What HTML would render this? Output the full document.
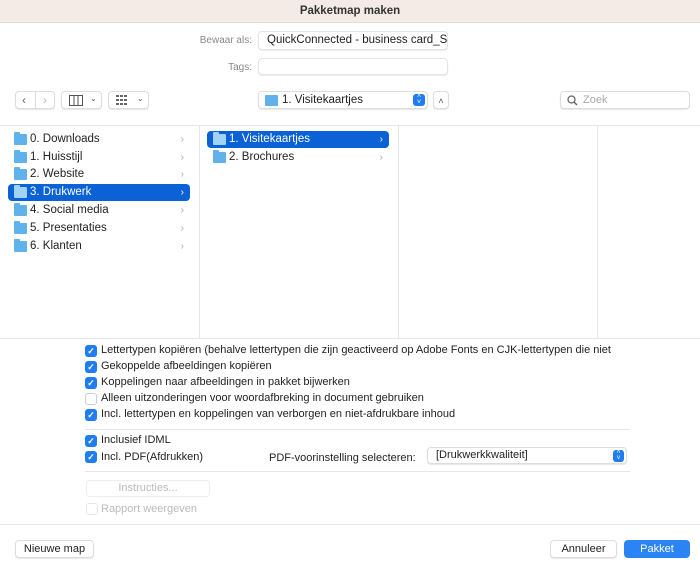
<!DOCTYPE html>
<html><head><style>
*{box-sizing:border-box;margin:0;padding:0}
body{width:700px;height:573px;background:#fff;font-family:"Liberation Sans",sans-serif;font-size:11px;color:#222;position:relative;overflow:hidden}
.a{position:absolute}
.title{left:0;top:0;width:700px;height:23px;background:#f4ebe6;border-bottom:1px solid #e2dad6;text-align:center;font-weight:bold;font-size:11.5px;line-height:23px;color:#333}
.fld{background:#fff;border:1px solid #e4e4e4;border-radius:4px;box-shadow:0 1px 1px rgba(0,0,0,.08)}
.btn{background:#fff;border:1px solid #ddd;border-radius:4px;box-shadow:0 1px 1px rgba(0,0,0,.1)}
.lbl{color:#888;font-size:10px;text-align:right}
.row{position:absolute;height:17px;line-height:17px;font-size:11.5px;color:#222}
.row .fo{position:absolute;left:6px;top:3px;width:13px;height:11px;background:#5fb2ea;border-radius:1px}
.row .fo:before{content:"";position:absolute;left:0;top:-2px;width:6px;height:3px;background:#5fb2ea;border-radius:1px 1px 0 0}
.row .t{position:absolute;left:22px}
.row .c{position:absolute;right:6px;color:#aaa;font-size:10px}
.sel{background:#0a62d6;color:#fff;border-radius:4px}
.sel .c{color:#fff}
.sel .fo,.sel .fo:before{background:#9fd3f7}
.cb{position:absolute;width:12px;height:12px;border-radius:3px;background:#1f7cf2;color:#fff;font-size:9px;line-height:12px;text-align:center;font-weight:bold}
.cb.off{background:#fff;border:1px solid #ccc}
.ot{position:absolute;font-size:11px;color:#222;white-space:nowrap}
.hr{position:absolute;height:1px;background:#e6e6e6}
</style></head><body>
<div class="a title">Pakketmap maken</div>
<div class="a lbl" style="left:190px;top:35px;width:62px">Bewaar als:</div>
<div class="a fld" style="left:258px;top:31px;width:190px;height:19px;line-height:17px;padding-left:8px;font-size:11.5px;white-space:nowrap;overflow:hidden">QuickConnected - business card_S</div>
<div class="a lbl" style="left:190px;top:62px;width:62px">Tags:</div>
<div class="a fld" style="left:258px;top:58px;width:190px;height:17px"></div>

<div class="a btn" style="left:15px;top:91px;width:40px;height:18px"><span class="a" style="left:6px;top:1px;color:#666;font-size:12px">&#x2039;</span><span class="a" style="left:19px;top:0;width:1px;height:16px;background:#ddd"></span><span class="a" style="left:27px;top:1px;color:#bbb;font-size:12px">&#x203A;</span></div>
<div class="a btn" style="left:61px;top:91px;width:41px;height:18px"><svg class="a" style="left:7px;top:3px" width="14" height="11"><rect x="0.5" y="0.5" width="13" height="10" fill="none" stroke="#555"/><line x1="5" y1="1" x2="5" y2="10" stroke="#555"/><line x1="9" y1="1" x2="9" y2="10" stroke="#555"/></svg><span class="a" style="left:28px;top:2px;font-size:8px;color:#555">&#x2304;</span></div>
<div class="a btn" style="left:108px;top:91px;width:41px;height:18px"><svg class="a" style="left:7px;top:3px" width="12" height="11" fill="#666"><rect x="0" y="0" width="3" height="2"/><rect x="4" y="0" width="3" height="2"/><rect x="8" y="0" width="3" height="2"/><rect x="0" y="4" width="3" height="2"/><rect x="4" y="4" width="3" height="2"/><rect x="8" y="4" width="3" height="2"/><rect x="0" y="8" width="3" height="2"/><rect x="4" y="8" width="3" height="2"/><rect x="8" y="8" width="3" height="2"/></svg><span class="a" style="left:28px;top:2px;font-size:8px;color:#555">&#x2304;</span></div>

<div class="a btn" style="left:258px;top:91px;width:170px;height:18px"><span class="a" style="left:6px;top:3px;width:13px;height:11px;background:#5fb2ea;border-radius:1px"></span><span class="a" style="left:23px;top:2px;font-size:11.5px">1. Visitekaartjes</span><span class="a" style="left:154px;top:2px;width:12px;height:12px;background:#1f7cf2;border-radius:3px;color:#fff;font-size:7px;line-height:6px;text-align:center">&#x2c4;<br>&#x2c5;</span></div>
<div class="a btn" style="left:433px;top:91px;width:16px;height:18px;text-align:center;font-size:9px;line-height:18px;color:#555">&#x2c4;</div>
<div class="a btn" style="left:560px;top:91px;width:130px;height:18px"><svg class="a" style="left:6px;top:3px" width="11" height="11"><circle cx="4.5" cy="4.5" r="3.5" fill="none" stroke="#666" stroke-width="1.3"/><line x1="7" y1="7" x2="10" y2="10" stroke="#666" stroke-width="1.5"/></svg><span class="a" style="left:22px;top:2px;color:#aaa">Zoek</span></div>

<div class="hr" style="left:0;top:125px;width:700px"></div>
<div class="a" style="left:199px;top:126px;width:1px;height:212px;background:#e6e6e6"></div>
<div class="a" style="left:398px;top:126px;width:1px;height:212px;background:#e6e6e6"></div>
<div class="a" style="left:597px;top:126px;width:1px;height:212px;background:#e6e6e6"></div>
<div class="hr" style="left:0;top:338px;width:700px"></div>

<div class="row" style="left:8px;top:131px;width:182px"><span class="fo"></span><span class="t">0. Downloads</span><span class="c">&#x203A;</span></div>
<div class="row" style="left:8px;top:149px;width:182px"><span class="fo"></span><span class="t">1. Huisstijl</span><span class="c">&#x203A;</span></div>
<div class="row" style="left:8px;top:166px;width:182px"><span class="fo"></span><span class="t">2. Website</span><span class="c">&#x203A;</span></div>
<div class="row sel" style="left:8px;top:184px;width:182px"><span class="fo"></span><span class="t">3. Drukwerk</span><span class="c">&#x203A;</span></div>
<div class="row" style="left:8px;top:202px;width:182px"><span class="fo"></span><span class="t">4. Social media</span><span class="c">&#x203A;</span></div>
<div class="row" style="left:8px;top:220px;width:182px"><span class="fo"></span><span class="t">5. Presentaties</span><span class="c">&#x203A;</span></div>
<div class="row" style="left:8px;top:238px;width:182px"><span class="fo"></span><span class="t">6. Klanten</span><span class="c">&#x203A;</span></div>
<div class="row sel" style="left:207px;top:131px;width:182px"><span class="fo"></span><span class="t">1. Visitekaartjes</span><span class="c">&#x203A;</span></div>
<div class="row" style="left:207px;top:149px;width:182px"><span class="fo"></span><span class="t">2. Brochures</span><span class="c">&#x203A;</span></div>

<span class="cb" style="left:85px;top:345px">&#x2713;</span><div class="ot" style="left:101px;top:344px;width:512px;overflow:hidden">Lettertypen kopiëren (behalve lettertypen die zijn geactiveerd op Adobe Fonts en CJK-lettertypen die niet</div>
<span class="cb" style="left:85px;top:361px">&#x2713;</span><div class="ot" style="left:101px;top:360px">Gekoppelde afbeeldingen kopiëren</div>
<span class="cb" style="left:85px;top:377px">&#x2713;</span><div class="ot" style="left:101px;top:376px">Koppelingen naar afbeeldingen in pakket bijwerken</div>
<span class="cb off" style="left:85px;top:393px"></span><div class="ot" style="left:101px;top:392px">Alleen uitzonderingen voor woordafbreking in document gebruiken</div>
<span class="cb" style="left:85px;top:409px">&#x2713;</span><div class="ot" style="left:101px;top:408px">Incl. lettertypen en koppelingen van verborgen en niet-afdrukbare inhoud</div>
<div class="hr" style="left:85px;top:429px;width:545px"></div>
<span class="cb" style="left:85px;top:435px">&#x2713;</span><div class="ot" style="left:101px;top:434px">Inclusief IDML</div>
<span class="cb" style="left:85px;top:451px">&#x2713;</span><div class="ot" style="left:101px;top:451px">Incl. PDF(Afdrukken)</div>
<div class="ot" style="left:269px;top:452px">PDF-voorinstelling selecteren:</div>
<div class="a btn" style="left:427px;top:447px;width:200px;height:17px"><span class="a" style="left:8px;top:1px">[Drukwerkkwaliteit]</span><span class="a" style="left:185px;top:2px;width:11px;height:12px;background:#1f7cf2;border-radius:3px;color:#fff;font-size:7px;line-height:6px;text-align:center">&#x2c4;<br>&#x2c5;</span></div>
<div class="hr" style="left:85px;top:471px;width:545px"></div>
<div class="a" style="left:86px;top:480px;width:124px;height:17px;border:1px solid #eee;border-radius:4px;color:#bbb;text-align:center;line-height:15px">Instructies...</div>
<span class="cb off" style="left:86px;top:503px;border-color:#e6e6e6"></span><div class="ot" style="left:101px;top:503px;color:#bbb">Rapport weergeven</div>
<div class="hr" style="left:0;top:524px;width:700px"></div>
<div class="a btn" style="left:15px;top:540px;width:79px;height:18px;text-align:center;line-height:16px">Nieuwe map</div>
<div class="a btn" style="left:550px;top:540px;width:67px;height:18px;text-align:center;line-height:16px">Annuleer</div>
<div class="a" style="left:624px;top:540px;width:66px;height:18px;background:#2a84f4;border-radius:4px;color:#fff;text-align:center;line-height:18px">Pakket</div>
</body></html>
